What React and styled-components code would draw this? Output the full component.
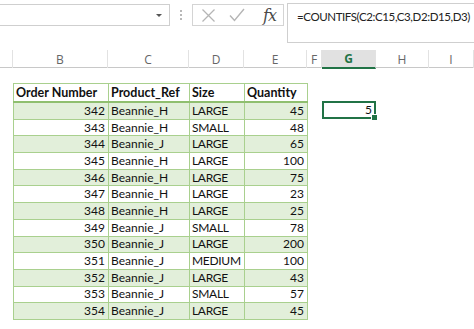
import React from 'react';
import styled, { createGlobalStyle } from 'styled-components';

const GlobalStyle = createGlobalStyle`
  html, body {
    margin: 0;
    padding: 0;
    background: #ffffff;
  }
  body {
    width: 474px;
    height: 329px;
    overflow: hidden;
    font-family: Lato, "Open Sans", sans-serif;
  }
`;

const COLS = '13px 95px 81px 55px 63px 15px 54px 53px 1fr';

const rows = [
  [342, 'Beannie_H', 'LARGE', 45],
  [343, 'Beannie_H', 'SMALL', 48],
  [344, 'Beannie_J', 'LARGE', 65],
  [345, 'Beannie_H', 'LARGE', 100],
  [346, 'Beannie_H', 'LARGE', 75],
  [347, 'Beannie_H', 'LARGE', 23],
  [348, 'Beannie_H', 'LARGE', 25],
  [349, 'Beannie_J', 'SMALL', 78],
  [350, 'Beannie_J', 'LARGE', 200],
  [351, 'Beannie_J', 'MEDIUM', 100],
  [352, 'Beannie_J', 'LARGE', 43],
  [353, 'Beannie_J', 'SMALL', 57],
  [354, 'Beannie_J', 'LARGE', 45],
];

const columns = ['', 'B', 'C', 'D', 'E', 'F', 'G', 'H', 'I'];

const Sheet = styled.div`
  width: 474px;
  height: 329px;
  overflow: hidden;
`;

const FormulaBar = styled.div`
  display: flex;
  align-items: flex-start;
  height: 50px;
  padding-top: 3px;
  box-sizing: border-box;
`;

const NameBox = styled.div`
  position: relative;
  flex: 0 0 171px;
  height: 22px;
  margin-top: 1px;
  margin-left: -1px;
  border: 1px solid #cfcfcf;
  box-sizing: border-box;
  background: #fff;
`;

const DropArrow = styled.span`
  position: absolute;
  right: 7px;
  top: 9px;
  width: 0;
  height: 0;
  border-left: 3px solid transparent;
  border-right: 3px solid transparent;
  border-top: 3px solid #555;
`;

const Dots = styled.div`
  flex: 0 0 22px;
  height: 22px;
  margin-top: 1px;
  display: flex;
  flex-direction: column;
  align-items: center;
  justify-content: center;
  gap: 2px;

  span {
    width: 2px;
    height: 2px;
    background: #b8b8b8;
  }
`;

const FxButtons = styled.div`
  flex: 0 0 92px;
  height: 22px;
  margin-top: 1px;
  border: 1px solid #d4d4d4;
  box-sizing: border-box;
  display: flex;
  align-items: center;
  padding-left: 8px;
  gap: 13px;
`;

const Fx = styled.span`
  font-family: "DejaVu Serif", "Liberation Serif", serif;
  font-style: italic;
  font-size: 16px;
  color: #4a4a4a;
  margin-left: 5px;
  letter-spacing: -1px;
`;

const FormulaInput = styled.div`
  flex: 1 1 auto;
  min-width: 0;
  height: 40px;
  margin-left: 3px;
  margin-right: -2px;
  border: 1px solid #cfcfcf;
  box-sizing: border-box;
  padding: 6px 0 0 9px;
  font-family: Lato, "Open Sans", sans-serif;
  font-size: 11.5px;
  letter-spacing: -0.4px;
  color: #222;
  white-space: nowrap;
  overflow: hidden;
`;

const HeaderRow = styled.div`
  display: grid;
  grid-template-columns: ${COLS};
  height: 17px;
  border-bottom: 1px solid #c8c8c8;
`;

const ColHead = styled.div`
  display: flex;
  align-items: center;
  justify-content: center;
  font-family: "Open Sans", Lato, sans-serif;
  font-size: 12px;
  color: ${(p) => (p.$active ? '#217346' : '#666')};
  font-weight: ${(p) => (p.$active ? 700 : 400)};
  background: ${(p) => (p.$active ? '#e1e1e1' : 'transparent')};
  border-right: 1px solid #e2e2e2;
  border-bottom: ${(p) => (p.$active ? '2px solid #217346' : '0')};
  margin-bottom: ${(p) => (p.$active ? '-1px' : '0')};
`;

const Body = styled.div`
  display: grid;
  grid-template-columns: ${COLS};
  align-items: start;
  padding-top: 15px;
`;

const Table = styled.table`
  grid-column: 2 / 6;
  border-collapse: collapse;
  table-layout: fixed;
  width: 295px;
  font-family: Lato, "Open Sans", sans-serif;
  font-size: 12px;
  color: #111;
`;

const Th = styled.th`
  height: 17px;
  padding: 0 2px;
  line-height: 15px;
  font-size: 12.5px;
  text-align: left;
  font-weight: 700;
  border: 1px solid #a9d08e;
  border-bottom: 2px solid #8fbf6f;
  white-space: nowrap;
  overflow: hidden;
`;

const Td = styled.td`
  height: 15.7px;
  padding: 0 3px 0 2px;
  line-height: 14px;
  text-align: ${(p) => (p.$num ? 'right' : 'left')};
  letter-spacing: ${(p) => (p.$caps ? '-0.3px' : '0')};
  border: 1px solid #a9d08e;
  white-space: nowrap;
  overflow: hidden;
`;

const Tr = styled.tr`
  background: ${(p) => (p.$band ? '#e2efda' : '#ffffff')};
`;

const Selected = styled.div`
  grid-column: 7;
  position: relative;
  margin-top: 18px;
  height: 18px;
  border: 2px solid #217346;
  box-sizing: border-box;
  text-align: right;
  padding-right: 2px;
  font-family: Lato, "Open Sans", sans-serif;
  font-size: 12px;
  line-height: 14px;
  color: #111;
`;

const Handle = styled.span`
  position: absolute;
  right: -4px;
  bottom: -4px;
  width: 5px;
  height: 5px;
  background: #217346;
  border: 1px solid #fff;
`;

const Cross = () => (
  <svg width="15" height="15" viewBox="0 0 15 15">
    <path d="M1.5 1.5 L13.5 13.5 M13.5 1.5 L1.5 13.5" stroke="#b5b5b5" strokeWidth="1.3" fill="none" />
  </svg>
);

const Check = () => (
  <svg width="16" height="14" viewBox="0 0 16 14">
    <path d="M1 7.5 L5.5 12.5 L15 1" stroke="#b5b5b5" strokeWidth="1.4" fill="none" />
  </svg>
);

export default function App() {
  return (
    <Sheet>
      <GlobalStyle />
      <FormulaBar>
        <NameBox>
          <DropArrow />
        </NameBox>
        <Dots>
          <span />
          <span />
          <span />
        </Dots>
        <FxButtons>
          <Cross />
          <Check />
          <Fx>fx</Fx>
        </FxButtons>
        <FormulaInput>=COUNTIFS(C2:C15,C3,D2:D15,D3)</FormulaInput>
      </FormulaBar>

      <HeaderRow>
        {columns.map((c, i) => (
          <ColHead key={i} $active={c === 'G'}>
            {c}
          </ColHead>
        ))}
      </HeaderRow>

      <Body>
        <Table>
          <colgroup>
            <col style={{ width: 95 }} />
            <col style={{ width: 81 }} />
            <col style={{ width: 55 }} />
            <col style={{ width: 63 }} />
          </colgroup>
          <thead>
            <tr>
              <Th>Order Number</Th>
              <Th>Product_Ref</Th>
              <Th>Size</Th>
              <Th>Quantity</Th>
            </tr>
          </thead>
          <tbody>
            {rows.map(([order, ref, size, qty], i) => (
              <Tr key={order} $band={i % 2 === 0}>
                <Td $num>{order}</Td>
                <Td>{ref}</Td>
                <Td $caps>{size}</Td>
                <Td $num>{qty}</Td>
              </Tr>
            ))}
          </tbody>
        </Table>
        <Selected>
          5
          <Handle />
        </Selected>
      </Body>
    </Sheet>
  );
}
